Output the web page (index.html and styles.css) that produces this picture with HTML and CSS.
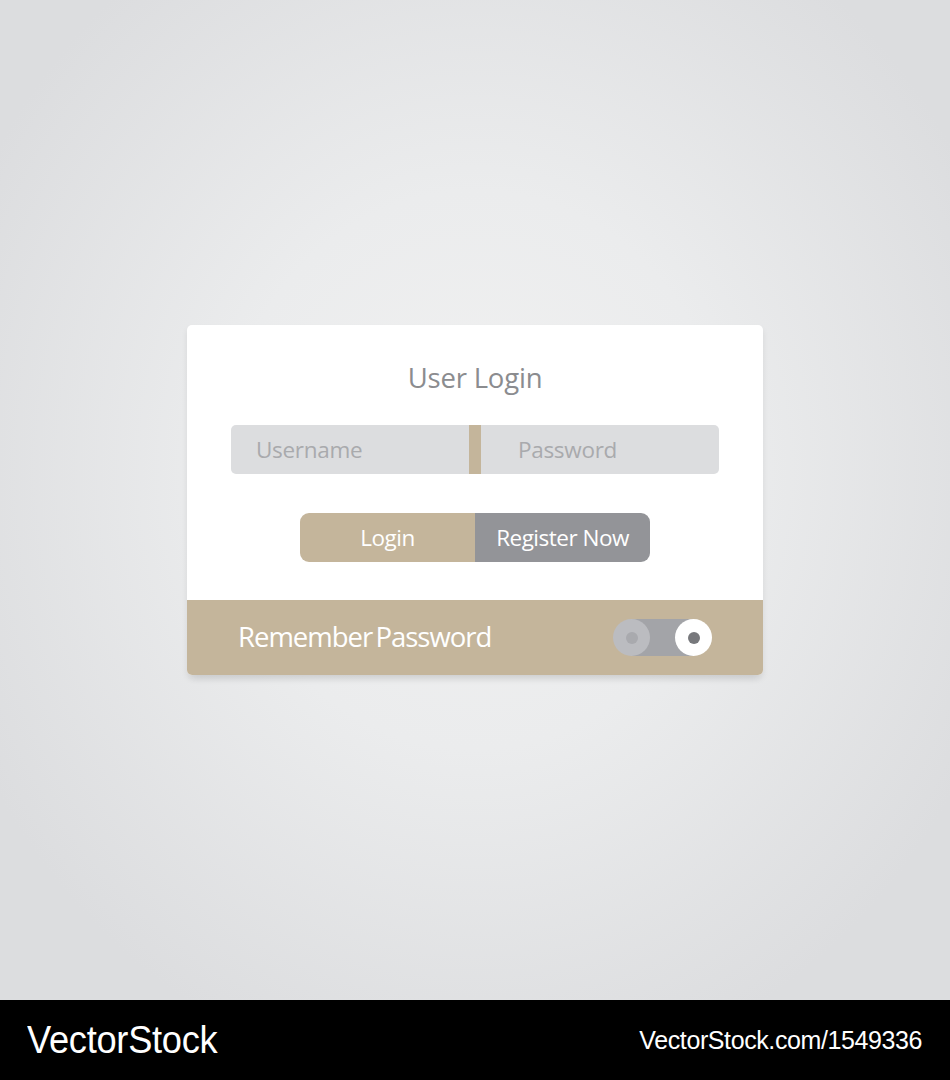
FILE: index.html
```html
<!DOCTYPE html>
<html lang="en">
<head>
    <meta charset="UTF-8">
    <meta name="viewport" content="width=device-width, initial-scale=1.0">
    <title>User Login</title>
    <link rel="stylesheet" href="styles.css">
</head>
<body>
    <div class="stage">
        <div class="login-card">
            <div class="card-body">
                <h1>User Login</h1>

                <div class="fields">
                    <input type="text" class="field" placeholder="Username">
                    <span class="field-divider"></span>
                    <input type="password" class="field field-right" placeholder="Password">
                </div>

                <div class="actions">
                    <button class="btn btn-login">Login</button>
                    <button class="btn btn-register">Register Now</button>
                </div>
            </div>

            <div class="card-footer">
                <span class="remember">Remember Password</span>
                <div class="toggle">
                    <span class="knob knob-off"><span class="dot"></span></span>
                    <span class="knob knob-on"><span class="dot"></span></span>
                </div>
            </div>
        </div>
    </div>

    <div class="credit-bar">
        <span class="brand">VectorStock</span>
        <span class="credit-url">VectorStock.com/1549336</span>
    </div>
</body>
</html>
```

FILE: styles.css
```css
body {
    margin: 0;
    font-family: "Open Sans", "Noto Sans", sans-serif;
    background: #000;
}
.stage {
    height: 1000px;
    display: flex;
    justify-content: center;
    align-items: flex-start;
    padding-top: 325px;
    box-sizing: border-box;
    background: radial-gradient(ellipse 560px 620px at 475px 470px, #f1f1f1 0%, #ebeced 45%, #dcdddf 100%);
}
.login-card {
    width: 576px;
    border-radius: 5px;
    overflow: hidden;
    background: #fff;
    box-shadow: 0 4px 6px rgba(0, 0, 0, 0.08), 0 10px 8px -6px rgba(0, 0, 0, 0.05);
}
.card-body {
    height: 275px;
    display: flex;
    flex-direction: column;
    align-items: center;
    box-sizing: border-box;
    padding-top: 33px;
}
h1 {
    margin: 0;
    font-size: 27.5px;
    font-weight: 400;
    color: #8b8c8f;
    letter-spacing: -0.2px;
    line-height: 40px;
}
.fields {
    display: flex;
    width: 488px;
    height: 49px;
    margin-top: 27px;
}
.field {
    flex: none;
    width: 238px;
    box-sizing: border-box;
    border: none;
    outline: none;
    background: #dcdddf;
    font-family: inherit;
    font-size: 22.5px;
    padding: 0 0 0 25px;
    border-radius: 5px 0 0 5px;
    color: #8b8c8f;
}
.field-right {
    border-radius: 0 5px 5px 0;
    padding-left: 37px;
}
.field::placeholder {
    color: #a9aaad;
    letter-spacing: -0.3px;
}
.field-divider {
    width: 12px;
    background: #c4b59b;
}
.actions {
    display: flex;
    margin-top: 39px;
    border-radius: 9px;
    overflow: hidden;
}
.btn {
    width: 175px;
    height: 49px;
    border: none;
    color: #fff;
    font-family: inherit;
    font-size: 22.5px;
    letter-spacing: -0.5px;
    cursor: pointer;
    padding: 0;
}
.btn-login {
    background: #c4b59b;
}
.btn-register {
    background: #939498;
}
.card-footer {
    height: 75px;
    background: #c4b59b;
    display: flex;
    align-items: center;
    justify-content: space-between;
    padding: 0 51px 0 51px;
}
.remember {
    color: #fff;
    font-size: 27.5px;
    letter-spacing: -1px;
    word-spacing: -3px;
    margin-top: -3px;
}
.toggle {
    position: relative;
    width: 99px;
    height: 37px;
    display: flex;
    justify-content: space-between;
}
.toggle::before {
    content: "";
    position: absolute;
    left: 18px;
    right: 18px;
    top: 0;
    bottom: 0;
    background: #a3a4a8;
}
.knob {
    position: relative;
    width: 37px;
    height: 37px;
    border-radius: 50%;
    display: flex;
    align-items: center;
    justify-content: center;
}
.knob-off {
    background: #bbbcc0;
}
.knob-on {
    background: #fff;
}
.dot {
    width: 12px;
    height: 12px;
    border-radius: 50%;
}
.knob-off .dot {
    background: #a9aaae;
}
.knob-on .dot {
    background: #77787c;
}
.credit-bar {
    height: 80px;
    background: #000;
    color: #fff;
    display: flex;
    align-items: center;
    justify-content: space-between;
    padding: 0 28px 0 27px;
    font-family: "Liberation Sans", Arial, sans-serif;
}
.brand {
    font-size: 39px;
    letter-spacing: -0.3px;
    transform: scaleX(0.93);
    transform-origin: left center;
}
.credit-url {
    font-size: 25px;
    letter-spacing: -0.4px;
}
```
